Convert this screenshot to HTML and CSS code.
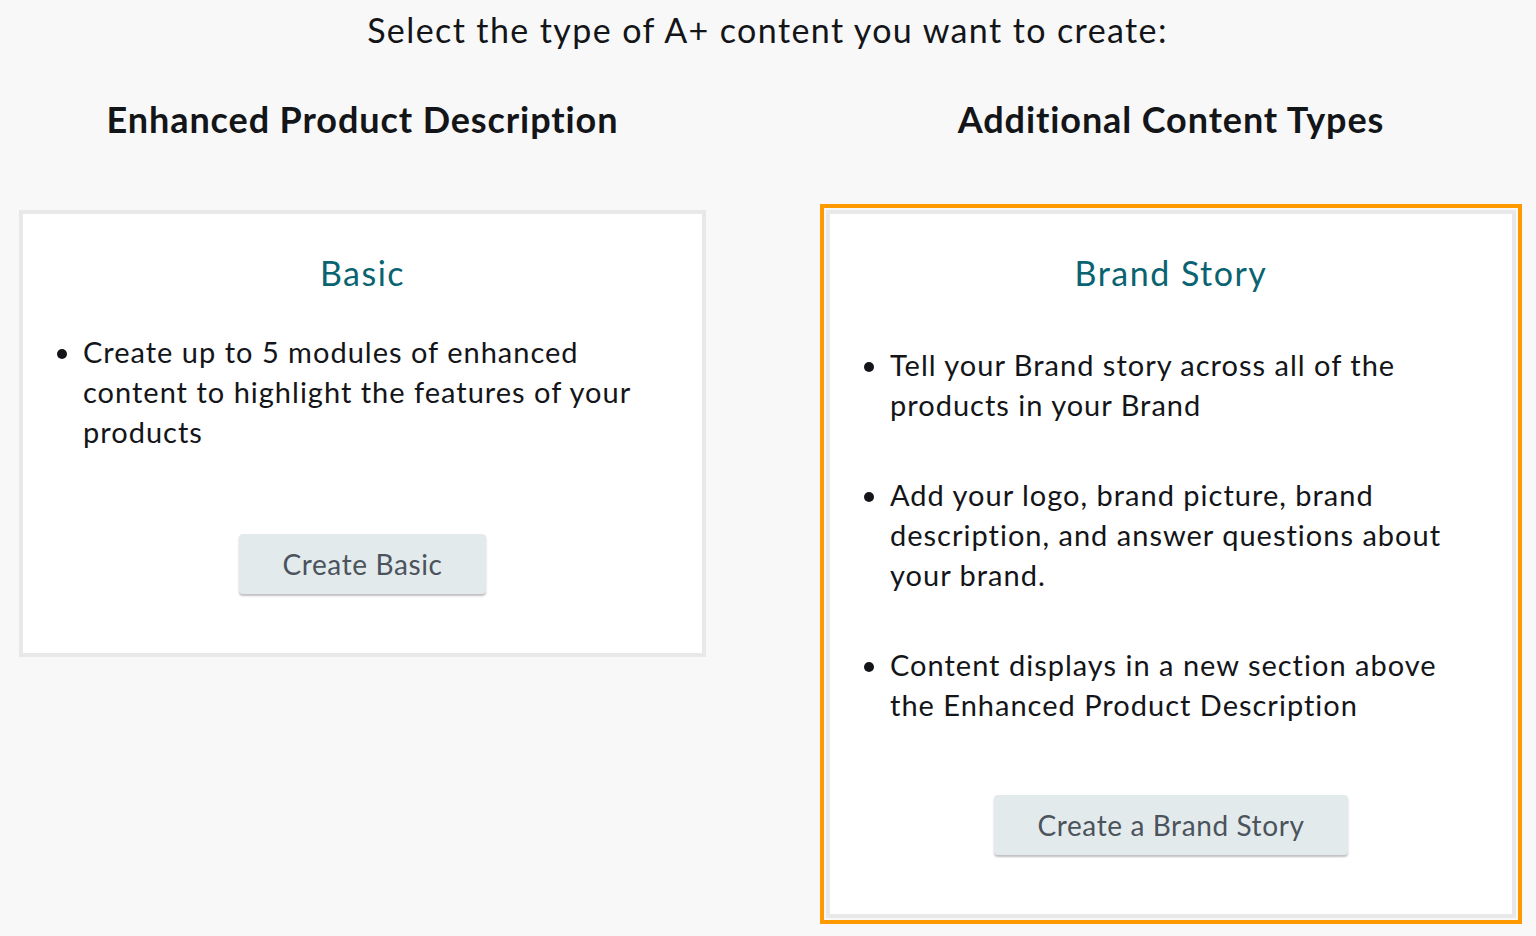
FILE: index.html
```html
<!DOCTYPE html>
<html lang="en">

<head>
    <meta charset="UTF-8">
    <meta name="viewport" content="width=device-width, initial-scale=1.0">
    <title>A+ Content Manager</title>
    <link rel="stylesheet" href="styles.css">
</head>

<body>
    <div class="page">
        <h1 class="prompt">Select the type of A+ content you want to create:</h1>

        <div class="columns">
            <!-- Enhanced Product Description -->
            <div class="column">
                <h2 class="column-title">Enhanced Product Description</h2>
                <div class="card">
                    <h3 class="card-title">Basic</h3>
                    <ul class="card-list">
                        <li>Create up to 5 modules of enhanced content to highlight the features of your products</li>
                    </ul>
                    <div class="card-action">
                        <button class="btn">Create Basic</button>
                    </div>
                </div>
            </div>

            <!-- Additional Content Types -->
            <div class="column">
                <h2 class="column-title">Additional Content Types</h2>
                <div class="card selected">
                    <h3 class="card-title">Brand Story</h3>
                    <ul class="card-list">
                        <li>Tell your Brand story across all of the products in your Brand</li>
                        <li>Add your logo, brand picture, brand description, and answer questions about your brand.</li>
                        <li>Content displays in a new section above the Enhanced Product Description</li>
                    </ul>
                    <div class="card-action">
                        <button class="btn">Create a Brand Story</button>
                    </div>
                </div>
            </div>
        </div>
    </div>
</body>

</html>
```

FILE: styles.css
```css
body {
    margin: 0;
    background-color: #f8f8f8;
    font-family: Lato, "Liberation Sans", sans-serif;
    color: #131519;
}

.page {
    padding: 10px 20px 12px 19px;
}

.prompt {
    margin: 0;
    font-size: 34px;
    font-weight: 400;
    line-height: 40px;
    letter-spacing: 1.4px;
    text-align: center;
}

.columns {
    display: grid;
    grid-template-columns: 687fr 690fr;
    column-gap: 120px;
    align-items: start;
    margin-top: 47px;
}

.column-title {
    margin: 0 0 69px;
    font-size: 36px;
    font-weight: 700;
    line-height: 44px;
    letter-spacing: 0.9px;
    text-align: center;
}

.card {
    background-color: #fff;
    border: 4px solid #e8e8e8;
    padding: 39px 0 59px;
}

.card.selected {
    margin-top: 1px;
    outline: 4px solid #ff9900;
    outline-offset: 2px;
}

.card-title {
    margin: 0;
    font-size: 34px;
    font-weight: 400;
    line-height: 40px;
    letter-spacing: 1.5px;
    color: #0a6370;
    text-align: center;
}

.card-list {
    margin: 39px 0 0;
    padding: 0 50px 0 60px;
    font-size: 29px;
    line-height: 40px;
    letter-spacing: 1px;
}

.card-list li + li {
    margin-top: 50px;
}

.card.selected .card-list {
    margin-top: 52px;
}

.card-action {
    display: flex;
    justify-content: center;
    margin-top: 82px;
}

.card.selected .card-action {
    margin-top: 70px;
}

.btn {
    height: 60px;
    padding: 0 44px;
    border: 0;
    border-radius: 4px;
    background-color: #e3eaec;
    box-shadow: 0 2px 2px rgba(0, 0, 0, 0.25);
    font-family: inherit;
    font-size: 28px;
    letter-spacing: 0.6px;
    color: #4b535c;
}
```
